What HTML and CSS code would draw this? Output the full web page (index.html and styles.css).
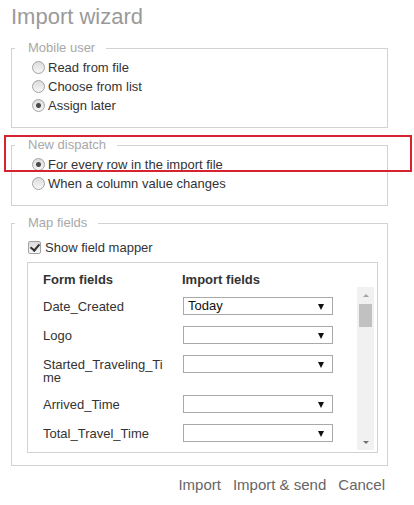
FILE: index.html
```html
<!DOCTYPE html>
<html lang="en">

<head>
    <meta charset="UTF-8">
    <meta name="viewport" content="width=device-width, initial-scale=1.0">
    <title>Import wizard</title>
    <link rel="stylesheet" href="styles.css">
</head>

<body>
    <div class="wizard">
        <h1 class="title">Import wizard</h1>

        <fieldset class="group">
            <legend>Mobile user</legend>
            <label class="option"><input type="radio" name="mobile-user">Read from file</label>
            <label class="option"><input type="radio" name="mobile-user">Choose from list</label>
            <label class="option"><input type="radio" name="mobile-user" checked>Assign later</label>
        </fieldset>

        <fieldset class="group">
            <legend>New dispatch</legend>
            <label class="option"><input type="radio" name="dispatch" checked>For every row in the import file</label>
            <label class="option"><input type="radio" name="dispatch">When a column value changes</label>
        </fieldset>

        <fieldset class="group group-map">
            <legend>Map fields</legend>
            <label class="option option-check"><input type="checkbox" checked>Show field mapper</label>

            <div class="mapper">
                <div class="map-head">
                    <div class="map-label">Form fields</div>
                    <div class="map-field">Import fields</div>
                </div>
                <div class="map-body">
                    <div class="map-rows">
                        <div class="map-row">
                            <div class="map-label">Date_Created</div>
                            <div class="select"><span>Today</span><i class="caret"></i></div>
                        </div>
                        <div class="map-row">
                            <div class="map-label">Logo</div>
                            <div class="select"><span></span><i class="caret"></i></div>
                        </div>
                        <div class="map-row">
                            <div class="map-label">Started_Traveling_Time</div>
                            <div class="select"><span></span><i class="caret"></i></div>
                        </div>
                        <div class="map-row">
                            <div class="map-label">Arrived_Time</div>
                            <div class="select"><span></span><i class="caret"></i></div>
                        </div>
                        <div class="map-row">
                            <div class="map-label">Total_Travel_Time</div>
                            <div class="select"><span></span><i class="caret"></i></div>
                        </div>
                    </div>
                    <div class="scrollbar">
                        <i class="scroll-up"></i>
                        <div class="scroll-thumb"></div>
                        <div class="scroll-space"></div>
                        <i class="scroll-down"></i>
                    </div>
                </div>
            </div>
        </fieldset>

        <div class="actions">
            <button type="button">Import</button>
            <button type="button">Import &amp; send</button>
            <button type="button">Cancel</button>
        </div>

        <!-- 강조 표시 -->
        <div class="highlight"></div>
    </div>
</body>

</html>
```

FILE: styles.css
```css
/* 전체 페이지 */
body {
    margin: 0;
    padding: 0;
    background: #fff;
    font-family: 'Liberation Sans', Arial, sans-serif;
    font-size: 13px;
    color: #333;
}

.wizard {
    position: relative;
    padding: 4px 26px 20px 11px;
}

.title {
    margin: 0 0 10px 0;
    font-size: 22px;
    line-height: 26px;
    font-weight: normal;
    color: #9a9a9a;
}

/* 그룹 박스 */
.group {
    margin: 0 0 9px 0;
    padding: 2px 9px 12px 20px;
    border: 1px solid #d2d2d2;
}

.group legend {
    margin-left: -17px;
    padding: 0 11px 0 13px;
    font-size: 13px;
    line-height: 16px;
    color: #a8a8a8;
}

.option {
    display: flex;
    align-items: center;
    height: 19px;
    line-height: 19px;
}

/* 라디오 버튼 */
.option input {
    appearance: none;
    -webkit-appearance: none;
    flex: none;
    width: 13px;
    height: 13px;
    margin: 0 3px 0 0;
    border: 1px solid #a3a3a3;
    border-radius: 50%;
    background: linear-gradient(#dcdcdc, #f7f7f7);
    box-sizing: border-box;
}

.option input:checked {
    background: radial-gradient(circle, #4a4a4a 0, #4a4a4a 2px, rgba(74, 74, 74, 0) 3px), linear-gradient(#dcdcdc, #f7f7f7);
}

/* 체크박스 */
.option-check {
    margin: 7px 0 5px 1px;
}

.option-check input {
    position: relative;
    border-radius: 2px;
    margin-right: 4px;
}

.option-check input:checked {
    background: linear-gradient(#dcdcdc, #f7f7f7);
}

.option-check input:checked::after {
    content: '';
    position: absolute;
    left: 3px;
    top: 0;
    width: 4px;
    height: 7px;
    border: solid #333;
    border-width: 0 2px 2px 0;
    transform: rotate(40deg);
}

.group-map {
    padding: 0 9px 12px 15px;
}

.group-map legend {
    margin-left: -12px;
}

/* 필드 매퍼 */
.mapper {
    border: 1px solid #d2d2d2;
    padding: 0 3px 2px 15px;
}

.map-head {
    display: flex;
    padding-top: 9px;
    line-height: 15px;
    font-weight: bold;
}

.map-label {
    width: 125px;
    margin-right: 15px;
    flex: none;
}

.map-field {
    margin-left: -1px;
}

.map-body {
    display: flex;
    height: 163px;
}

.map-rows {
    flex: 1;
    overflow: hidden;
    padding-top: 5px;
}

.map-row {
    display: flex;
    align-items: flex-start;
    padding: 5px 0 6px 0;
}

.map-row .map-label {
    padding-top: 3px;
    line-height: 13px;
    word-break: break-all;
}

.select {
    position: relative;
    width: 150px;
    height: 18px;
    box-sizing: border-box;
    border: 1px solid #a9a9a9;
    background: #fff;
    padding-left: 4px;
    line-height: 16px;
    color: #111;
}

.caret {
    position: absolute;
    right: 8px;
    top: 6px;
    width: 0;
    height: 0;
    border-left: 3px solid transparent;
    border-right: 3px solid transparent;
    border-top: 6px solid #111;
}

/* 스크롤바 */
.scrollbar {
    width: 17px;
    flex: none;
    display: flex;
    flex-direction: column;
    align-items: center;
    background: #f1f1f1;
}

.scroll-up,
.scroll-down {
    width: 0;
    height: 0;
    border-left: 3px solid transparent;
    border-right: 3px solid transparent;
}

.scroll-up {
    margin-top: 7px;
    border-bottom: 3px solid #a3a3a3;
}

.scroll-thumb {
    width: 13px;
    height: 23px;
    margin-top: 7px;
    background: #c1c1c1;
}

.scroll-space {
    flex: 1;
}

.scroll-down {
    margin-bottom: 6px;
    border-top: 3px solid #707070;
}

/* 하단 버튼 */
.actions {
    display: flex;
    justify-content: flex-end;
    gap: 12px;
    margin-top: 8px;
    padding-right: 3px;
}

.actions button {
    padding: 0;
    border: none;
    background: none;
    font-family: inherit;
    font-size: 15px;
    line-height: 20px;
    color: #666;
    cursor: pointer;
}

.highlight {
    position: absolute;
    left: 4px;
    top: 135px;
    width: 408px;
    height: 37px;
    box-sizing: border-box;
    border: 2px solid #d52330;
}
```
